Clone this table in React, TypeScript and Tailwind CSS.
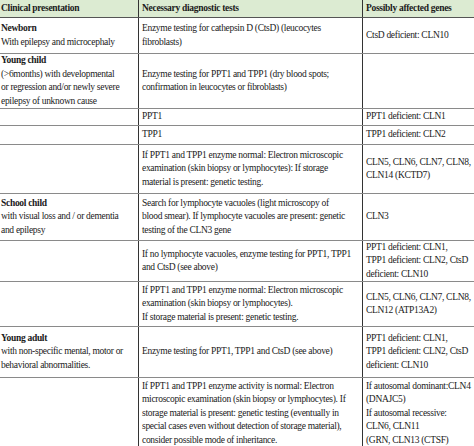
import React from 'react';

type Row = {
  h: number;
  c1?: React.ReactNode;
  c2: React.ReactNode;
  c3: React.ReactNode;
};

const rows: Row[] = [
  {
    h: 36,
    c1: (
      <>
        <b>Newborn</b>
        <br />
        With epilepsy and microcephaly
      </>
    ),
    c2: (
      <>
        Enzyme testing for cathepsin D (CtsD) (leucocytes
        <br />
        fibroblasts)
      </>
    ),
    c3: 'CtsD deficient: CLN10',
  },
  {
    h: 55,
    c1: (
      <>
        <b>Young child</b>
        <br />
        (&gt;6months) with developmental
        <br />
        or regression and/or newly severe
        <br />
        epilepsy of unknown cause
      </>
    ),
    c2: (
      <>
        Enzyme testing for PPT1 and TPP1 (dry blood spots;
        <br />
        confirmation in leucocytes or fibroblasts)
      </>
    ),
    c3: '',
  },
  { h: 17, c2: 'PPT1', c3: 'PPT1 deficient: CLN1' },
  { h: 19, c2: 'TPP1', c3: 'TPP1 deficient: CLN2' },
  {
    h: 49,
    c2: (
      <>
        If PPT1 and TPP1 enzyme normal: Electron microscopic
        <br />
        examination (skin biopsy or lymphocytes): If storage
        <br />
        material is present: genetic testing.
      </>
    ),
    c3: (
      <>
        CLN5, CLN6, CLN7, CLN8,
        <br />
        CLN14 (KCTD7)
      </>
    ),
  },
  {
    h: 47,
    c1: (
      <>
        <b>School child</b>
        <br />
        with visual loss and / or dementia
        <br />
        and epilepsy
      </>
    ),
    c2: (
      <>
        Search for lymphocyte vacuoles (light microscopy of
        <br />
        blood smear). If lymphocyte vacuoles are present: genetic
        <br />
        testing of the CLN3 gene
      </>
    ),
    c3: 'CLN3',
  },
  {
    h: 41,
    c2: (
      <>
        If no lymphocyte vacuoles, enzyme testing for PPT1, TPP1
        <br />
        and CtsD (see above)
      </>
    ),
    c3: (
      <>
        PPT1 deficient: CLN1,
        <br />
        TPP1 deficient: CLN2, CtsD
        <br />
        deficient: CLN10
      </>
    ),
  },
  {
    h: 45,
    c2: (
      <>
        If PPT1 and TPP1 enzyme normal: Electron microscopic
        <br />
        examination (skin biopsy or lymphocytes).
        <br />
        If storage material is present: genetic testing.
      </>
    ),
    c3: (
      <>
        CLN5, CLN6, CLN7, CLN8,
        <br />
        CLN12 (ATP13A2)
      </>
    ),
  },
  {
    h: 51,
    c1: (
      <>
        <b>Young adult</b>
        <br />
        with non-specific mental, motor or
        <br />
        behavioral abnormalities.
      </>
    ),
    c2: 'Enzyme testing for PPT1, TPP1 and CtsD (see above)',
    c3: (
      <>
        PPT1 deficient: CLN1,
        <br />
        TPP1 deficient: CLN2, CtsD
        <br />
        deficient: CLN10
      </>
    ),
  },
  {
    h: 72,
    c2: (
      <>
        If PPT1 and TPP1 enzyme activity is normal: Electron
        <br />
        microscopic examination (skin biopsy or lymphocytes). If
        <br />
        storage material is present: genetic testing (eventually in
        <br />
        special cases even without detection of storage material),
        <br />
        consider possible mode of inheritance.
      </>
    ),
    c3: (
      <>
        If autosomal dominant:CLN4
        <br />
        (DNAJC5)
        <br />
        If autosomal recessive:
        <br />
        CLN6, CLN11
        <br />
        (GRN, CLN13 (CTSF)
      </>
    ),
  },
];

export default function App() {
  return (
    <div
      className="h-[446px] w-[474px] overflow-hidden bg-white text-[9.5px] leading-[13.5px] tracking-[-0.3px] text-[#1a1a1a]"
      style={{ fontFamily: '"Liberation Serif", "Times New Roman", serif' }}
    >
      <div className="grid h-[18px] grid-cols-[138px_224px_112px] border-b border-[#555] bg-[#dcebd2] font-bold">
        <div className="flex items-center whitespace-nowrap pl-px">Clinical presentation</div>
        <div className="flex items-center whitespace-nowrap border-l border-[#333] pl-[3px]">
          Necessary diagnostic tests
        </div>
        <div className="flex items-center whitespace-nowrap border-l border-[#333] pl-[3px]">
          Possibly affected genes
        </div>
      </div>

      {rows.map((r, i) => (
        <div
          key={i}
          className="grid grid-cols-[138px_224px_112px] border-b border-[#8a8a8a]"
          style={{ height: r.h }}
        >
          <div className="flex items-center whitespace-nowrap pl-px">
            <div>{r.c1}</div>
          </div>
          <div className="flex items-center whitespace-nowrap border-l border-[#333] pl-[3px]">
            <div>{r.c2}</div>
          </div>
          <div className="flex items-center overflow-hidden whitespace-nowrap border-l border-[#333] pl-[3px]">
            <div>{r.c3}</div>
          </div>
        </div>
      ))}
    </div>
  );
}
